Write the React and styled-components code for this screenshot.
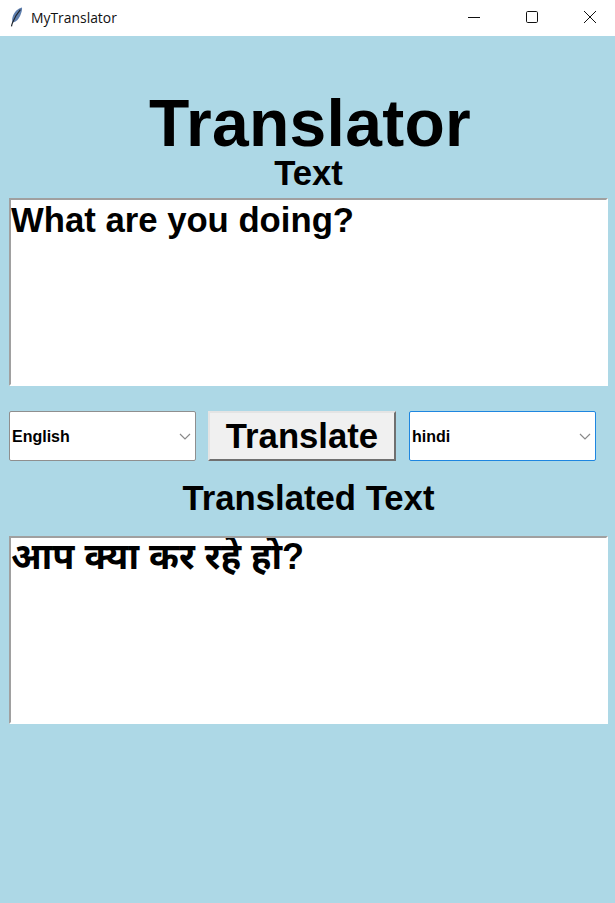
import styled, { createGlobalStyle } from "styled-components"

const Global = createGlobalStyle`
html, body {
  margin: 0;
  padding: 0;
  background: #add8e6;
}
`

function App() {
  return (
    <Window>
      <Global />
      <TitleBar>
        <AppIcon viewBox="0 0 16 20">
          <path d="M14 .6C9.5 1.6 6 5.4 4.6 10 4 12.2 4 14.2 4.6 15.6 8.2 14.8 10.8 12 12.3 8.4 13.5 5.8 14.4 3 14 .6Z" fill="#5f7fae" />
          <path d="M12.4 2.6C9.4 6 6.6 10.6 4.6 15.4 4.1 16.8 3.7 18 3.5 19.4" fill="none" stroke="#20262e" strokeWidth="1.2" />
        </AppIcon>
        <WindowTitle>MyTranslator</WindowTitle>
        <WindowButtons>
          <WindowButton>
            <svg width="14" height="14" viewBox="0 0 14 14"><path d="M1 7.5H13" stroke="#111" strokeWidth="1" /></svg>
          </WindowButton>
          <WindowButton>
            <svg width="14" height="14" viewBox="0 0 14 14"><rect x="1.5" y="1.5" width="11" height="11" rx="1.2" fill="none" stroke="#111" strokeWidth="1" /></svg>
          </WindowButton>
          <WindowButton>
            <svg width="14" height="14" viewBox="0 0 14 14"><path d="M1 1L13 13M13 1L1 13" stroke="#111" strokeWidth="1" /></svg>
          </WindowButton>
        </WindowButtons>
      </TitleBar>
      <Content>
        <Heading>Translator</Heading>
        <Label>Text</Label>
        <TextPanel value="What are you doing?" readOnly />
        <Controls>
          <SelectWrap>
            <Select defaultValue="English">
              <option>English</option>
            </Select>
            <Chevron />
          </SelectWrap>
          <TranslateButton>Translate</TranslateButton>
          <SelectWrap $focused>
            <Select defaultValue="hindi">
              <option>hindi</option>
            </Select>
            <Chevron />
          </SelectWrap>
        </Controls>
        <ResultLabel>Translated Text</ResultLabel>
        <TextPanel $hindi value="आप क्या कर रहे हो?" readOnly />
      </Content>
    </Window>
  )
}

const Chevron = () => (
  <ChevronIcon viewBox="0 0 12 7">
    <path d="M1 1L6 6L11 1" fill="none" stroke="#8a8a8a" strokeWidth="1.2" />
  </ChevronIcon>
)

const Window = styled.div`
width: 615px;
height: 903px;
overflow: hidden;
background: #add8e6;
font-family: "Liberation Sans", Arial, sans-serif;
color: #000;
`

const TitleBar = styled.div`
box-sizing: border-box;
height: 36px;
background: #fff;
display: flex;
align-items: center;
padding-left: 8px;
padding-bottom: 2px;
`

const AppIcon = styled.svg`
width: 16px;
height: 20px;
margin-right: 7px;
`

const WindowTitle = styled.div`
flex: 1;
font-family: "Open Sans", "Liberation Sans", sans-serif;
font-size: 13.9px;
color: #111;
`

const WindowButtons = styled.div`
display: flex;
gap: 8px;
`

const WindowButton = styled.div`
width: 50px;
height: 34px;
display: flex;
align-items: center;
justify-content: center;
`

const Content = styled.div`
padding: 57px 7px 0 9px;
display: flex;
flex-direction: column;
align-items: center;
`

const Heading = styled.h1`
margin: 0 0 0 3px;
font-size: 66px;
line-height: 60px;
letter-spacing: .3px;
font-weight: 700;
`

const Label = styled.div`
font-size: 34.7px;
line-height: 38px;
font-weight: 700;
margin-top: 1px;
margin-bottom: 6px;
`

const ResultLabel = styled(Label)`
margin-top: 18px;
margin-bottom: 19px;
`

const TextPanel = styled.textarea`
display: block;
box-sizing: border-box;
width: 100%;
height: 188px;
margin: 0;
padding: ${p => (p.$hindi ? "0" : "1px 0")};
resize: none;
outline: none;
overflow: hidden;
background: #fff;
border: 2px solid;
border-color: #a0a0a0 #fff #fff #a0a0a0;
font-family: "Liberation Sans", "Noto Sans Devanagari", "Noto Sans", sans-serif;
font-size: ${p => (p.$hindi ? "36px" : "34.7px")};
line-height: 38px;
font-weight: 700;
color: #000;
`

const Controls = styled.div`
align-self: stretch;
margin-top: 25px;
display: flex;
align-items: stretch;
height: 50px;
gap: 12px;
padding-right: 12px;
`

const SelectWrap = styled.div`
position: relative;
box-sizing: border-box;
width: 187px;
margin-left: ${p => (p.$focused ? "1px" : "0")};
background: #fff;
border: 1px solid ${p => (p.$focused ? "#1e86e0" : "#8f8f8f")};
border-radius: 2px;
`

const Select = styled.select`
appearance: none;
width: 100%;
height: 100%;
border: 0;
outline: none;
background: transparent;
padding: 0 0 0 2px;
font-family: "Liberation Sans", Arial, sans-serif;
font-size: 16px;
font-weight: 700;
color: #000;
`

const ChevronIcon = styled.svg`
position: absolute;
right: 4px;
top: 21px;
width: 12px;
height: 7px;
pointer-events: none;
`

const TranslateButton = styled.button`
box-sizing: border-box;
width: 188px;
margin: 0;
padding: 0;
background: #f0f0f0;
border: 2px solid;
border-color: #e4e4e4 #707070 #707070 #e4e4e4;
font-family: "Liberation Sans", Arial, sans-serif;
font-size: 34.7px;
font-weight: 700;
color: #000;
`

export default App
